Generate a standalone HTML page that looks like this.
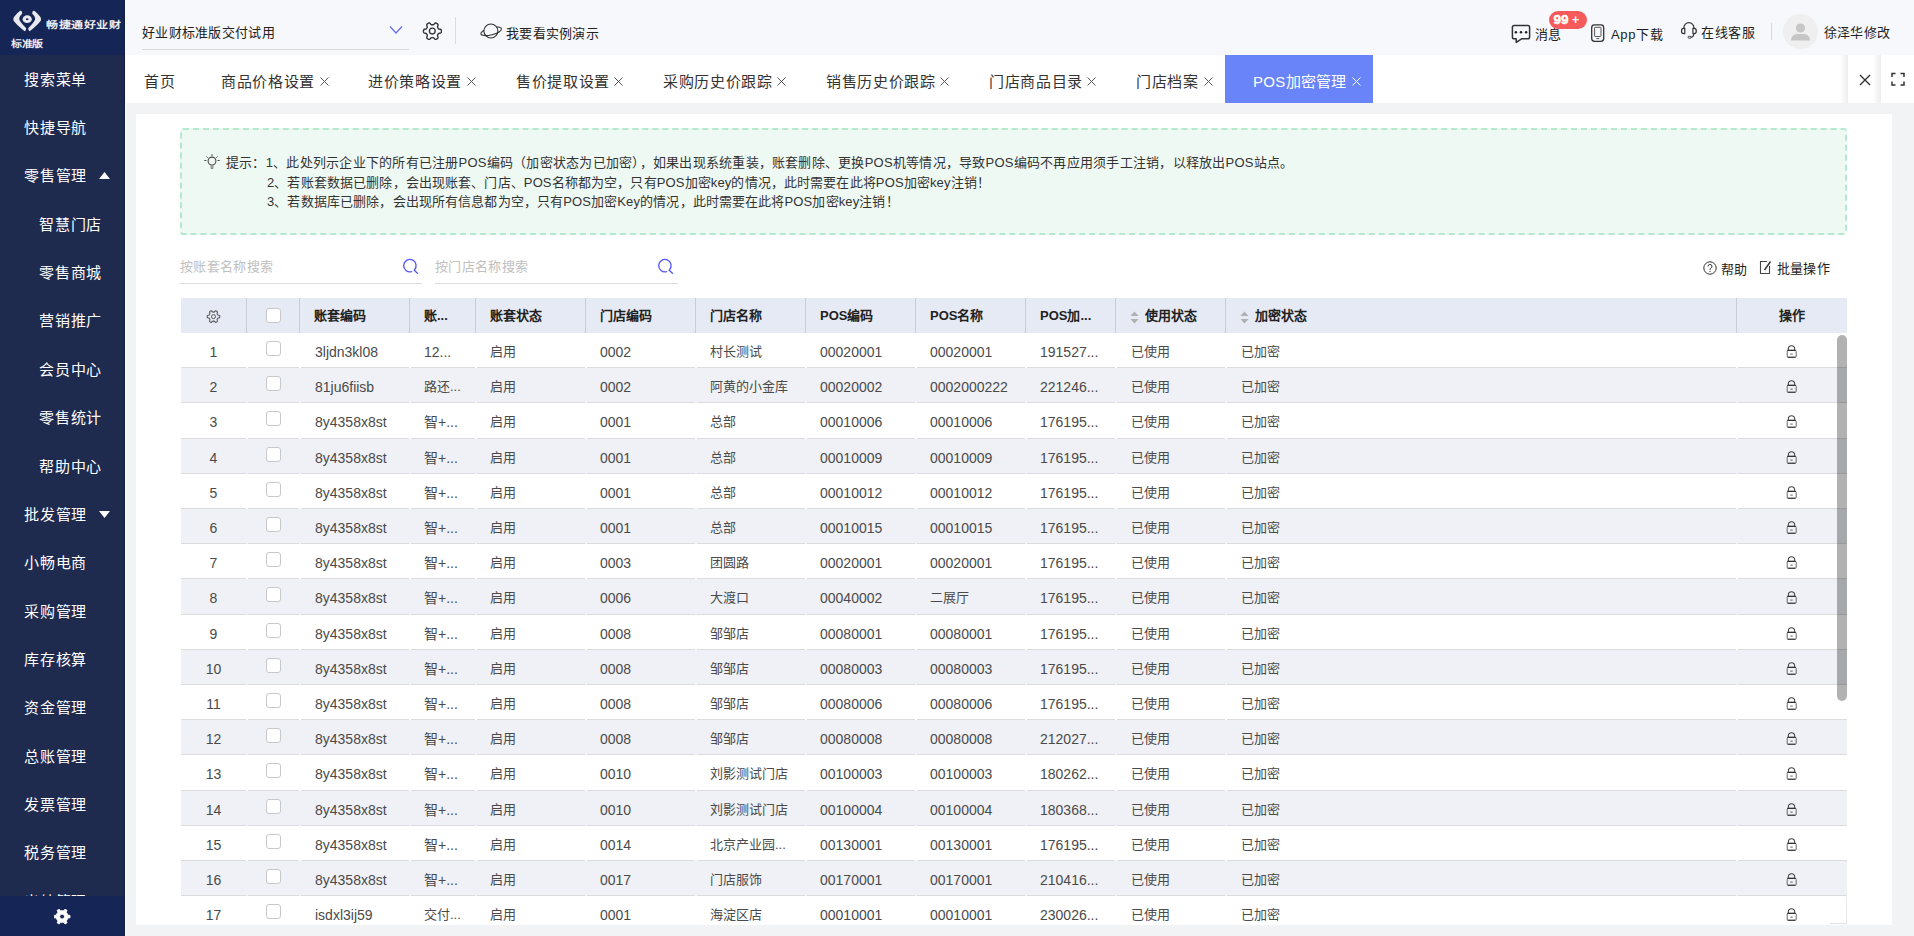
<!DOCTYPE html>
<html lang="zh-CN"><head><meta charset="utf-8"><title>POS加密管理</title>
<style>
*{box-sizing:border-box;margin:0;padding:0}
html,body{width:1914px;height:936px;overflow:hidden;background:#f2f3f5;font-family:"Liberation Sans",sans-serif;color:#333}
.abs{position:absolute;white-space:nowrap}
#side{position:absolute;left:0;top:0;width:125px;height:936px;background:#1e2a4e;border-right:1px solid #0e1d46}
#side .logo{position:absolute;left:0;top:0;width:124px;height:55px;background:#152555}
#side .mi{position:absolute;left:24px;color:#fff;font-size:15px;letter-spacing:0.8px;line-height:20px;font-weight:500}
#side .sub{left:39px}
#side .foot{position:absolute;left:0;top:896px;width:124px;height:40px;background:#152555}
#wline{position:absolute;left:125px;top:0;width:1px;height:936px;background:#fff}
#hdr{position:absolute;left:126px;top:0;width:1788px;height:55px;background:#f7f8fc}
#tabs{position:absolute;left:126px;top:55px;width:1788px;height:48px;background:#fff}
.tab{position:absolute;top:0;height:48px;line-height:48px;font-size:15px;letter-spacing:0.7px;color:#333}
.tab .x{display:inline-block;position:absolute}
#card{position:absolute;left:136px;top:114px;width:1756px;height:811px;background:#fff}
#tip{position:absolute;left:180px;top:128px;width:1667px;height:107px;background:#eff9f4;border:2px dashed #b5e9cf;border-radius:3px}
.tipt{position:absolute;font-size:13px;color:#333;letter-spacing:0.2px;line-height:19px}
.hd{position:absolute;top:298px;height:35px;background:#e6eaf4}
.ht{position:absolute;top:298px;line-height:35px;font-size:13px;font-weight:700;color:#222}
.vb{position:absolute;top:298px;width:1px;height:35px;background:#c9ccd3}
.row{position:absolute;left:181px;width:1666px}
.c{position:absolute;font-size:14px;color:#4a4a4a;line-height:20px}
.cj{font-size:13px}
.bb{position:absolute;height:1px;background:#dcdcdc}
.cb{position:absolute;width:15px;height:15px;border:1px solid #c8c8c8;border-radius:3px;background:#fff}
</style></head><body>

<div id="side"><div class="logo"></div>
<div class="mi" style="top:69.7px">搜索菜单</div>
<div class="mi" style="top:118.1px">快捷导航</div>
<div class="mi" style="top:166.4px">零售管理</div>
<div class="mi sub" style="top:214.8px">智慧门店</div>
<div class="mi sub" style="top:263.1px">零售商城</div>
<div class="mi sub" style="top:311.4px">营销推广</div>
<div class="mi sub" style="top:359.8px">会员中心</div>
<div class="mi sub" style="top:408.1px">零售统计</div>
<div class="mi sub" style="top:456.5px">帮助中心</div>
<div class="mi" style="top:504.9px">批发管理</div>
<div class="mi" style="top:553.2px">小畅电商</div>
<div class="mi" style="top:601.6px">采购管理</div>
<div class="mi" style="top:649.9px">库存核算</div>
<div class="mi" style="top:698.3px">资金管理</div>
<div class="mi" style="top:746.6px">总账管理</div>
<div class="mi" style="top:795.0px">发票管理</div>
<div class="mi" style="top:843.3px">税务管理</div>
<div class="mi" style="top:891.7px">出纳管理</div>
<svg class="abs" style="left:98px;top:171px" width="13" height="9"><path d="M6.5 1L12 8H1z" fill="#fff"/></svg>
<svg class="abs" style="left:98px;top:510px" width="13" height="9"><path d="M1 1H12L6.5 8z" fill="#fff"/></svg>
<div class="foot"></div>
<svg class="abs" style="left:54px;top:909px" width="17" height="16" viewBox="0 0 17 16"><path fill="#fff" fill-rule="evenodd" stroke="#fff" stroke-width="0.8" stroke-linejoin="round" d="M13.49 4.97 L13.95 6.25 L16.00 6.35 L16.00 8.85 L13.95 8.95 L13.49 10.23 L13.07 10.96 L12.19 11.99 L13.13 13.82 L10.97 15.07 L9.85 13.34 L8.52 13.59 L7.68 13.59 L6.35 13.34 L5.23 15.07 L3.07 13.82 L4.01 11.99 L3.13 10.96 L2.71 10.23 L2.25 8.95 L0.20 8.85 L0.20 6.35 L2.25 6.25 L2.71 4.97 L3.13 4.24 L4.01 3.21 L3.07 1.38 L5.23 0.13 L6.35 1.86 L7.68 1.61 L8.52 1.61 L9.85 1.86 L10.97 0.13 L13.13 1.38 L12.19 3.21 L13.07 4.24Z M10.50 7.60A2.4 2.4 0 1 0 5.70 7.60A2.4 2.4 0 1 0 10.50 7.60Z"/></svg>
</div><div id="wline"></div>
<svg class="abs" style="left:0;top:0" width="60" height="40" viewBox="0 0 60 40">
<path d="M20.5 10.5Q22.6 11.6 22.2 13.8Q18.8 16.8 19.3 19.5Q20.2 22.3 26.2 28.2Q26.2 30.6 24.7 31.3Q17.5 25.8 14.2 21.6Q12.4 19 14.4 16.4Q17 13 20.5 10.5Z" fill="#e8e9ee"/>
<path d="M33.9 10.5Q31.8 11.6 32.2 13.8Q35.6 16.8 35.1 19.5Q34.2 22.3 28.2 28.2Q28.2 30.6 29.7 31.3Q36.9 25.8 40.2 21.6Q42 19 40 16.4Q37.4 13 33.9 10.5Z" fill="#e8e9ee"/>
<ellipse cx="27.2" cy="19.2" rx="4.6" ry="3.9" fill="#e8e9ee"/>
<ellipse cx="27.2" cy="19.2" rx="1.3" ry="0.9" fill="#1a2553"/>
</svg>
<div class="abs" style="left:46px;top:14.5px;font-size:12px;font-weight:700;color:#eceef3;letter-spacing:0.55px;line-height:16px;transform:scaleY(0.8);transform-origin:0 100%">畅捷通好业财</div>
<div class="abs" style="left:11px;top:36px;font-size:11px;font-weight:700;color:#eceef3;letter-spacing:-0.4px;line-height:14px;transform:scaleY(0.85);transform-origin:0 100%">标准版</div>
<div id="hdr"></div>
<div class="abs" style="left:142px;top:24px;font-size:13px;letter-spacing:0.3px;line-height:18px;color:#222">好业财标准版交付试用</div>
<div class="abs" style="left:142px;top:49px;width:267px;height:1px;background:#dadada"></div>
<svg class="abs" style="left:389px;top:25px" width="14" height="10"><path d="M1 1.5L7 8L13 1.5" fill="none" stroke="#6a6ef2" stroke-width="1.3"/></svg>
<svg class="abs" style="left:420px;top:19px" width="25" height="25" viewBox="420 19 25 25"><path fill="none" stroke="#333" stroke-width="1.4" d="M441.35 31.20 L441.35 31.43 L441.33 31.67 L441.30 31.90 L441.26 32.13 L441.20 32.36 L441.09 32.58 L440.93 32.78 L440.67 32.96 L440.30 33.10 L439.84 33.19 L439.38 33.27 L439.00 33.35 L438.74 33.44 L438.56 33.56 L438.43 33.70 L438.33 33.84 L438.24 33.98 L438.15 34.13 L438.07 34.28 L437.99 34.42 L437.90 34.57 L437.82 34.72 L437.73 34.86 L437.65 35.01 L437.58 35.17 L437.53 35.35 L437.51 35.57 L437.56 35.85 L437.68 36.21 L437.84 36.64 L437.99 37.09 L438.06 37.49 L438.03 37.80 L437.94 38.04 L437.80 38.24 L437.64 38.41 L437.46 38.56 L437.27 38.70 L437.08 38.83 L436.88 38.95 L436.67 39.06 L436.46 39.17 L436.25 39.26 L436.02 39.34 L435.80 39.40 L435.55 39.42 L435.30 39.38 L435.01 39.24 L434.71 38.99 L434.39 38.64 L434.10 38.27 L433.84 37.99 L433.63 37.81 L433.43 37.72 L433.25 37.67 L433.08 37.65 L432.91 37.65 L432.74 37.65 L432.57 37.65 L432.40 37.65 L432.23 37.65 L432.06 37.65 L431.89 37.65 L431.72 37.65 L431.55 37.67 L431.37 37.72 L431.17 37.81 L430.96 37.99 L430.70 38.27 L430.41 38.64 L430.09 38.99 L429.79 39.24 L429.50 39.38 L429.25 39.42 L429.00 39.40 L428.78 39.34 L428.55 39.26 L428.34 39.17 L428.13 39.06 L427.92 38.95 L427.72 38.83 L427.53 38.70 L427.34 38.56 L427.16 38.41 L427.00 38.24 L426.86 38.04 L426.77 37.80 L426.74 37.49 L426.81 37.09 L426.96 36.64 L427.12 36.21 L427.24 35.85 L427.29 35.57 L427.27 35.35 L427.22 35.17 L427.15 35.01 L427.07 34.86 L426.98 34.72 L426.90 34.57 L426.81 34.42 L426.73 34.28 L426.65 34.13 L426.56 33.98 L426.47 33.84 L426.37 33.70 L426.24 33.56 L426.06 33.44 L425.80 33.35 L425.42 33.27 L424.96 33.19 L424.50 33.10 L424.13 32.96 L423.87 32.78 L423.71 32.58 L423.60 32.36 L423.54 32.13 L423.50 31.90 L423.47 31.67 L423.45 31.43 L423.45 31.20 L423.45 30.97 L423.47 30.73 L423.50 30.50 L423.54 30.27 L423.60 30.04 L423.71 29.82 L423.87 29.62 L424.13 29.44 L424.50 29.30 L424.96 29.21 L425.42 29.13 L425.80 29.05 L426.06 28.96 L426.24 28.84 L426.37 28.70 L426.47 28.56 L426.56 28.42 L426.65 28.27 L426.73 28.12 L426.81 27.98 L426.90 27.83 L426.98 27.68 L427.07 27.54 L427.15 27.39 L427.22 27.23 L427.27 27.05 L427.29 26.83 L427.24 26.55 L427.12 26.19 L426.96 25.76 L426.81 25.31 L426.74 24.91 L426.77 24.60 L426.86 24.36 L427.00 24.16 L427.16 23.99 L427.34 23.84 L427.53 23.70 L427.72 23.57 L427.92 23.45 L428.13 23.34 L428.34 23.23 L428.55 23.14 L428.78 23.06 L429.00 23.00 L429.25 22.98 L429.50 23.02 L429.79 23.16 L430.09 23.41 L430.41 23.76 L430.70 24.13 L430.96 24.41 L431.17 24.59 L431.37 24.68 L431.55 24.73 L431.72 24.75 L431.89 24.75 L432.06 24.75 L432.23 24.75 L432.40 24.75 L432.57 24.75 L432.74 24.75 L432.91 24.75 L433.08 24.75 L433.25 24.73 L433.43 24.68 L433.63 24.59 L433.84 24.41 L434.10 24.13 L434.39 23.76 L434.71 23.41 L435.01 23.16 L435.30 23.02 L435.55 22.98 L435.80 23.00 L436.02 23.06 L436.25 23.14 L436.46 23.23 L436.67 23.34 L436.88 23.45 L437.08 23.57 L437.27 23.70 L437.46 23.84 L437.64 23.99 L437.80 24.16 L437.94 24.36 L438.03 24.60 L438.06 24.91 L437.99 25.31 L437.84 25.76 L437.68 26.19 L437.56 26.55 L437.51 26.83 L437.53 27.05 L437.58 27.23 L437.65 27.39 L437.73 27.54 L437.82 27.68 L437.90 27.83 L437.99 27.98 L438.07 28.12 L438.15 28.27 L438.24 28.42 L438.33 28.56 L438.43 28.70 L438.56 28.84 L438.74 28.96 L439.00 29.05 L439.38 29.13 L439.84 29.21 L440.30 29.30 L440.67 29.44 L440.93 29.62 L441.09 29.82 L441.20 30.04 L441.26 30.27 L441.30 30.50 L441.33 30.73 L441.35 30.97Z"/><circle cx="432.3" cy="31.1" r="2.9" fill="none" stroke="#333" stroke-width="1.3"/></svg>
<div class="abs" style="left:455px;top:17px;width:1px;height:27px;background:#dcdcdc"></div>
<svg class="abs" style="left:478px;top:20px" width="26" height="22" viewBox="478 20 26 22"><path d="M480.82 33.89A10.7 3.6 -14 0 1 501.58 28.71" fill="none" stroke="#333" stroke-width="1.1"/><circle cx="490.9" cy="31" r="7" fill="#f7f8fc" stroke="#333" stroke-width="1.1"/><path d="M501.58 28.71A10.7 3.6 -14 0 1 480.82 33.89" fill="none" stroke="#333" stroke-width="1.1"/></svg>
<div class="abs" style="left:506px;top:25px;font-size:13px;letter-spacing:0.3px;line-height:18px;color:#222">我要看实例演示</div>
<svg class="abs" style="left:1508px;top:21px" width="26" height="25" viewBox="1508 21 26 25"><path d="M1514.2 25.6H1527.8Q1529.6 25.6 1529.6 27.4V37Q1529.6 38.8 1527.8 38.8H1521.6L1516.2 42.4V38.8H1514.2Q1512.4 38.8 1512.4 37V27.4Q1512.4 25.6 1514.2 25.6Z" fill="none" stroke="#333" stroke-width="1.5" stroke-linejoin="round"/><circle cx="1515.9" cy="32.3" r="1.25" fill="#222"/><circle cx="1521" cy="32.3" r="1.25" fill="#222"/><circle cx="1526.1" cy="32.3" r="1.25" fill="#222"/></svg>
<div class="abs" style="left:1535px;top:25.5px;font-size:13px;line-height:18px;color:#222">消息</div>
<div class="abs" style="left:1549px;top:11px;width:38px;height:18px;border-radius:9px;background:#f65a5a"></div><div class="abs" style="left:1553.5px;top:10.5px;font-size:13.5px;font-weight:700;line-height:18px;color:#fff;-webkit-text-stroke:0.5px #fff">99</div><div class="abs" style="left:1572px;top:11px;font-size:12.5px;font-weight:700;line-height:18px;color:#fff">+</div>
<svg class="abs" style="left:1589px;top:22px" width="18" height="22" viewBox="1589 22 18 22"><rect x="1591.7" y="24.9" width="12" height="16.5" rx="2.8" fill="none" stroke="#333" stroke-width="1.3"/><rect x="1594.6" y="27.3" width="6.4" height="9.2" rx="0.6" fill="none" stroke="#555" stroke-width="1"/><path d="M1596.4 38.6h2.8" stroke="#444" stroke-width="0.9"/></svg>
<div class="abs" style="left:1611px;top:25.5px;font-size:13px;line-height:18px;color:#222;letter-spacing:0.7px">App下载</div>
<svg class="abs" style="left:1678px;top:19px" width="22" height="22" viewBox="1678 19 22 22"><path d="M1683.9 28.3V27.6A5 5 0 0 1 1693.9 27.6V28.3" fill="none" stroke="#333" stroke-width="1.2"/><path d="M1684.8 28.3H1683.6Q1681.5 28.3 1681.5 30.95Q1681.5 33.6 1683.6 33.6H1684.8Z" fill="none" stroke="#333" stroke-width="1.2" stroke-linejoin="round"/><path d="M1692.9 28.3H1694.1Q1696.3 28.3 1696.3 30.95Q1696.3 33.6 1694.1 33.6H1692.9Z" fill="none" stroke="#333" stroke-width="1.2" stroke-linejoin="round"/><path d="M1693.9 33.9Q1693.5 37 1691.1 37.3" fill="none" stroke="#333" stroke-width="1.1"/><ellipse cx="1689.6" cy="37.3" rx="1.6" ry="1.05" fill="none" stroke="#333" stroke-width="1"/></svg>
<div class="abs" style="left:1701px;top:23.5px;font-size:13px;line-height:18px;color:#222;letter-spacing:0.5px">在线客服</div>
<div class="abs" style="left:1771px;top:23px;width:1px;height:17px;background:#d6d6d6"></div>
<div class="abs" style="left:1783px;top:14px;width:35px;height:35px;border-radius:50%;background:#efefef"></div>
<svg class="abs" style="left:1790px;top:22px" width="20" height="19" viewBox="0 0 20 19"><circle cx="10.5" cy="6" r="4.6" fill="#c6c6c6"/><path d="M1 18.5q0-5 5-6.5h9q5 1.5 5 6.5z" fill="#c6c6c6"/></svg>
<div class="abs" style="left:1824px;top:24px;font-size:13px;letter-spacing:0.2px;line-height:18px;color:#222">徐泽华修改</div>
<div id="tabs"></div>
<div class="abs" style="left:144px;top:70.5px;font-size:15px;letter-spacing:0.7px;line-height:22px;color:#333">首页</div>
<div class="abs" style="left:221px;top:70.5px;font-size:15px;letter-spacing:0.7px;line-height:22px;color:#333">商品价格设置</div>
<svg class="abs" style="left:320px;top:77px" width="9" height="9"><path d="M0.5 0.5L8.5 8.5M8.5 0.5L0.5 8.5" stroke="#555" stroke-width="1"/></svg>
<div class="abs" style="left:368px;top:70.5px;font-size:15px;letter-spacing:0.7px;line-height:22px;color:#333">进价策略设置</div>
<svg class="abs" style="left:467px;top:77px" width="9" height="9"><path d="M0.5 0.5L8.5 8.5M8.5 0.5L0.5 8.5" stroke="#555" stroke-width="1"/></svg>
<div class="abs" style="left:516px;top:70.5px;font-size:15px;letter-spacing:0.7px;line-height:22px;color:#333">售价提取设置</div>
<svg class="abs" style="left:614px;top:77px" width="9" height="9"><path d="M0.5 0.5L8.5 8.5M8.5 0.5L0.5 8.5" stroke="#555" stroke-width="1"/></svg>
<div class="abs" style="left:663px;top:70.5px;font-size:15px;letter-spacing:0.7px;line-height:22px;color:#333">采购历史价跟踪</div>
<svg class="abs" style="left:777px;top:77px" width="9" height="9"><path d="M0.5 0.5L8.5 8.5M8.5 0.5L0.5 8.5" stroke="#555" stroke-width="1"/></svg>
<div class="abs" style="left:826px;top:70.5px;font-size:15px;letter-spacing:0.7px;line-height:22px;color:#333">销售历史价跟踪</div>
<svg class="abs" style="left:940px;top:77px" width="9" height="9"><path d="M0.5 0.5L8.5 8.5M8.5 0.5L0.5 8.5" stroke="#555" stroke-width="1"/></svg>
<div class="abs" style="left:989px;top:70.5px;font-size:15px;letter-spacing:0.7px;line-height:22px;color:#333">门店商品目录</div>
<svg class="abs" style="left:1087px;top:77px" width="9" height="9"><path d="M0.5 0.5L8.5 8.5M8.5 0.5L0.5 8.5" stroke="#555" stroke-width="1"/></svg>
<div class="abs" style="left:1136px;top:70.5px;font-size:15px;letter-spacing:0.7px;line-height:22px;color:#333">门店档案</div>
<svg class="abs" style="left:1204px;top:77px" width="9" height="9"><path d="M0.5 0.5L8.5 8.5M8.5 0.5L0.5 8.5" stroke="#555" stroke-width="1"/></svg>
<div class="abs" style="left:1225px;top:55px;width:148px;height:48px;background:#6984f8"></div>
<div class="abs" style="left:1253px;top:70.5px;font-size:15px;letter-spacing:0.3px;line-height:22px;color:#fff">POS加密管理</div>
<svg class="abs" style="left:1352px;top:77px" width="9" height="9"><path d="M0.5 0.5L8.5 8.5M8.5 0.5L0.5 8.5" stroke="#fff" stroke-width="1"/></svg>
<div class="abs" style="left:1840px;top:55px;width:8px;height:48px;background:linear-gradient(90deg,rgba(0,0,0,0),rgba(0,0,0,0.07))"></div>
<div class="abs" style="left:1848px;top:55px;width:33px;height:48px;background:#fff"></div>
<div class="abs" style="left:1873px;top:55px;width:8px;height:48px;background:linear-gradient(90deg,rgba(0,0,0,0),rgba(0,0,0,0.07))"></div>
<div class="abs" style="left:1881px;top:55px;width:33px;height:48px;background:#fff"></div>
<svg class="abs" style="left:1859px;top:74px" width="12" height="12"><path d="M1 1L11 11M11 1L1 11" stroke="#333" stroke-width="1.4"/></svg>
<svg class="abs" style="left:1891px;top:72px" width="14" height="14"><path d="M1 5V1.5h3.5M9.5 1.5H13V5M13 9.5V13H9.5M4.5 13H1V9.5" fill="none" stroke="#333" stroke-width="1.5"/></svg>
<div id="card"></div>
<div id="tip"></div>
<svg class="abs" style="left:203px;top:153px" width="18" height="17" viewBox="0 0 18 17"><circle cx="9" cy="8" r="3.9" fill="none" stroke="#444" stroke-width="1.05"/><rect x="7.4" y="12" width="3.2" height="2.6" fill="#9a9a9a"/><path d="M7.8 15.2h2.4" stroke="#555" stroke-width="1"/><path d="M9 1v2M1.2 7.5h2.3M14.5 7.5h2.3M3.5 3.5l1.2 1.2M14.5 3.5l-1.2 1.2" stroke="#555" stroke-width="1"/></svg>
<div class="tipt" style="left:226px;top:153px;letter-spacing:0.24px">提示：1、此处列示企业下的所有已注册POS编码（加密状态为已加密），如果出现系统重装，账套删除、更换POS机等情况，导致POS编码不再应用须手工注销，以释放出POS站点。</div>
<div class="tipt" style="left:267px;top:173px;letter-spacing:0.13px">2、若账套数据已删除，会出现账套、门店、POS名称都为空，只有POS加密key的情况，此时需要在此将POS加密key注销！</div>
<div class="tipt" style="left:267px;top:192px;letter-spacing:0.13px">3、若数据库已删除，会出现所有信息都为空，只有POS加密Key的情况，此时需要在此将POS加密key注销！</div>
<div class="abs" style="left:180px;top:256.5px;font-size:13px;line-height:20px;color:#c0c0c0;letter-spacing:0.35px">按账套名称搜索</div>
<div class="abs" style="left:180px;top:283px;width:242px;height:1px;background:#dcdcdc"></div>
<svg class="abs" style="left:400px;top:256px" width="20" height="20" viewBox="400 256 20 20"><path d="M411.6 271.6A6.2 6.2 0 1 1 414.4 269.9" fill="none" stroke="#5457f5" stroke-width="1.35" stroke-linecap="round"/><path d="M414.3 270.3L417.4 273.3" stroke="#5457f5" stroke-width="1.35" stroke-linecap="round"/></svg>
<div class="abs" style="left:435px;top:256.5px;font-size:13px;line-height:20px;color:#c0c0c0;letter-spacing:0.35px">按门店名称搜索</div>
<div class="abs" style="left:435px;top:283px;width:243px;height:1px;background:#dcdcdc"></div>
<svg class="abs" style="left:655px;top:256px" width="20" height="20" viewBox="400 256 20 20"><path d="M411.6 271.6A6.2 6.2 0 1 1 414.4 269.9" fill="none" stroke="#5457f5" stroke-width="1.35" stroke-linecap="round"/><path d="M414.3 270.3L417.4 273.3" stroke="#5457f5" stroke-width="1.35" stroke-linecap="round"/></svg>
<svg class="abs" style="left:1703px;top:261px" width="14" height="14" viewBox="0 0 14 14"><circle cx="7" cy="7" r="6.2" fill="none" stroke="#333" stroke-width="1"/><path d="M5 5.4a2 2 0 1 1 2.7 1.9c-.5.2-.7.5-.7 1v.7" fill="none" stroke="#333" stroke-width="1"/><circle cx="7" cy="10.4" r=".6" fill="#333"/></svg>
<div class="abs" style="left:1721px;top:261px;font-size:13px;line-height:18px;color:#222">帮助</div>
<svg class="abs" style="left:1759px;top:260px" width="13" height="15" viewBox="0 0 13 15"><path d="M8 1.5H1.5v12h9V6" fill="none" stroke="#444" stroke-width="1.1"/><path d="M11.5 1.5L5.5 10" stroke="#333" stroke-width="1.4"/></svg>
<div class="abs" style="left:1777px;top:259.5px;font-size:13px;line-height:18px;color:#222;letter-spacing:0.2px">批量操作</div>
<div class="hd" style="left:181px;width:1666px"></div>
<div class="vb" style="left:246px"></div>
<div class="vb" style="left:299px"></div>
<div class="vb" style="left:409px"></div>
<div class="vb" style="left:475px"></div>
<div class="vb" style="left:585px"></div>
<div class="vb" style="left:695px"></div>
<div class="vb" style="left:805px"></div>
<div class="vb" style="left:915px"></div>
<div class="vb" style="left:1025px"></div>
<div class="vb" style="left:1115px"></div>
<div class="vb" style="left:1225px"></div>
<div class="vb" style="left:1736px"></div>
<svg class="abs" style="left:205px;top:308px" width="17" height="17" viewBox="205 308 17 17"><path fill="none" stroke="#555" stroke-width="1.05" d="M219.80 316.60 L219.79 316.82 L219.77 317.04 L219.74 317.26 L219.67 317.47 L219.55 317.67 L219.32 317.84 L218.94 317.96 L218.49 318.03 L218.12 318.10 L217.88 318.19 L217.74 318.31 L217.64 318.44 L217.55 318.58 L217.48 318.71 L217.40 318.85 L217.32 318.99 L217.24 319.12 L217.16 319.26 L217.10 319.41 L217.07 319.60 L217.11 319.85 L217.23 320.21 L217.40 320.63 L217.48 321.02 L217.45 321.30 L217.34 321.51 L217.19 321.67 L217.02 321.81 L216.84 321.94 L216.65 322.06 L216.46 322.16 L216.26 322.25 L216.05 322.33 L215.83 322.38 L215.60 322.37 L215.34 322.25 L215.05 321.99 L214.76 321.64 L214.51 321.35 L214.31 321.19 L214.14 321.13 L213.97 321.10 L213.81 321.10 L213.66 321.10 L213.50 321.10 L213.34 321.10 L213.19 321.10 L213.03 321.10 L212.86 321.13 L212.69 321.19 L212.49 321.35 L212.24 321.64 L211.95 321.99 L211.66 322.25 L211.40 322.37 L211.17 322.38 L210.95 322.33 L210.74 322.25 L210.54 322.16 L210.35 322.06 L210.16 321.94 L209.98 321.81 L209.81 321.67 L209.66 321.51 L209.55 321.30 L209.52 321.02 L209.60 320.63 L209.77 320.21 L209.89 319.85 L209.93 319.60 L209.90 319.41 L209.84 319.26 L209.76 319.12 L209.68 318.99 L209.60 318.85 L209.52 318.71 L209.45 318.58 L209.36 318.44 L209.26 318.31 L209.12 318.19 L208.88 318.10 L208.51 318.03 L208.06 317.96 L207.68 317.84 L207.45 317.67 L207.33 317.47 L207.26 317.26 L207.23 317.04 L207.21 316.82 L207.20 316.60 L207.21 316.38 L207.23 316.16 L207.26 315.94 L207.33 315.73 L207.45 315.53 L207.68 315.36 L208.06 315.24 L208.51 315.17 L208.88 315.10 L209.12 315.01 L209.26 314.89 L209.36 314.76 L209.45 314.62 L209.52 314.49 L209.60 314.35 L209.68 314.21 L209.76 314.08 L209.84 313.94 L209.90 313.79 L209.93 313.60 L209.89 313.35 L209.77 312.99 L209.60 312.57 L209.52 312.18 L209.55 311.90 L209.66 311.69 L209.81 311.53 L209.98 311.39 L210.16 311.26 L210.35 311.14 L210.54 311.04 L210.74 310.95 L210.95 310.87 L211.17 310.82 L211.40 310.83 L211.66 310.95 L211.95 311.21 L212.24 311.56 L212.49 311.85 L212.69 312.01 L212.86 312.07 L213.03 312.10 L213.19 312.10 L213.34 312.10 L213.50 312.10 L213.66 312.10 L213.81 312.10 L213.97 312.10 L214.14 312.07 L214.31 312.01 L214.51 311.85 L214.76 311.56 L215.05 311.21 L215.34 310.95 L215.60 310.83 L215.83 310.82 L216.05 310.87 L216.26 310.95 L216.46 311.04 L216.65 311.14 L216.84 311.26 L217.02 311.39 L217.19 311.53 L217.34 311.69 L217.45 311.90 L217.48 312.18 L217.40 312.57 L217.23 312.99 L217.11 313.35 L217.07 313.60 L217.10 313.79 L217.16 313.94 L217.24 314.08 L217.32 314.21 L217.40 314.35 L217.48 314.49 L217.55 314.62 L217.64 314.76 L217.74 314.89 L217.88 315.01 L218.12 315.10 L218.49 315.17 L218.94 315.24 L219.32 315.36 L219.55 315.53 L219.67 315.73 L219.74 315.94 L219.77 316.16 L219.79 316.38Z"/><circle cx="213.5" cy="316.6" r="2" fill="none" stroke="#555" stroke-width="1"/></svg>
<div class="cb" style="left:266px;top:308px"></div>
<div class="ht" style="left:314px">账套编码</div>
<div class="ht" style="left:424px">账...</div>
<div class="ht" style="left:490px">账套状态</div>
<div class="ht" style="left:600px">门店编码</div>
<div class="ht" style="left:710px">门店名称</div>
<div class="ht" style="left:820px">POS编码</div>
<div class="ht" style="left:930px">POS名称</div>
<div class="ht" style="left:1040px">POS加...</div>
<div class="ht" style="left:1145px">使用状态</div>
<div class="ht" style="left:1255px">加密状态</div>
<div class="ht" style="left:1779px">操作</div>
<svg class="abs" style="left:1130px;top:311px" width="9" height="13"><path d="M4.5 0.5L8.5 5H0.5z" fill="#b0b0b0"/><path d="M0.5 8H8.5L4.5 12.5z" fill="#b0b0b0"/></svg>
<svg class="abs" style="left:1240px;top:311px" width="9" height="13"><path d="M4.5 0.5L8.5 5H0.5z" fill="#b0b0b0"/><path d="M0.5 8H8.5L4.5 12.5z" fill="#b0b0b0"/></svg>
<div class="row" style="top:333.00px;height:35.20px;background:#fff"></div>
<div class="bb" style="left:181px;top:367.20px;width:65px"></div>
<div class="bb" style="left:248px;top:367.20px;width:51px"></div>
<div class="bb" style="left:301px;top:367.20px;width:108px"></div>
<div class="bb" style="left:411px;top:367.20px;width:64px"></div>
<div class="bb" style="left:477px;top:367.20px;width:108px"></div>
<div class="bb" style="left:587px;top:367.20px;width:108px"></div>
<div class="bb" style="left:697px;top:367.20px;width:108px"></div>
<div class="bb" style="left:807px;top:367.20px;width:108px"></div>
<div class="bb" style="left:917px;top:367.20px;width:108px"></div>
<div class="bb" style="left:1027px;top:367.20px;width:88px"></div>
<div class="bb" style="left:1117px;top:367.20px;width:108px"></div>
<div class="bb" style="left:1227px;top:367.20px;width:509px"></div>
<div class="bb" style="left:1738px;top:367.20px;width:109px"></div>
<div class="c" style="left:181px;width:65px;text-align:center;top:342.00px">1</div>
<div class="cb" style="left:266px;top:341.00px"></div>
<div class="c" style="left:315px;top:342.00px">3ljdn3kl08</div>
<div class="c" style="left:424px;top:342.00px">12...</div>
<div class="c cj" style="left:490px;top:342.00px">启用</div>
<div class="c" style="left:600px;top:342.00px">0002</div>
<div class="c cj" style="left:710px;top:342.00px">村长测试</div>
<div class="c" style="left:820px;top:342.00px">00020001</div>
<div class="c" style="left:930px;top:342.00px">00020001</div>
<div class="c" style="left:1040px;top:342.00px">191527...</div>
<div class="c cj" style="left:1131px;top:342.00px">已使用</div>
<div class="c cj" style="left:1241px;top:342.00px">已加密</div>
<svg class="abs" style="left:1785px;top:345.00px" width="13" height="14" viewBox="0 0 13 14"><path d="M3.35 5.3V3.8A3.15 3.15 0 0 1 9.65 3.8V5.3" fill="none" stroke="#444" stroke-width="1.05"/><rect x="2.2" y="5.35" width="9" height="6.9" rx="1" fill="none" stroke="#666" stroke-width="1"/><path d="M2.3 5.35H10.7M2.6 12.3H10.4" stroke="#333" stroke-width="1.05"/><path d="M5.3 9.1h2.4" stroke="#666" stroke-width="1"/></svg>
<div class="row" style="top:368.20px;height:35.20px;background:#f0f1f6"></div>
<div class="bb" style="left:181px;top:402.40px;width:65px"></div>
<div class="bb" style="left:248px;top:402.40px;width:51px"></div>
<div class="bb" style="left:301px;top:402.40px;width:108px"></div>
<div class="bb" style="left:411px;top:402.40px;width:64px"></div>
<div class="bb" style="left:477px;top:402.40px;width:108px"></div>
<div class="bb" style="left:587px;top:402.40px;width:108px"></div>
<div class="bb" style="left:697px;top:402.40px;width:108px"></div>
<div class="bb" style="left:807px;top:402.40px;width:108px"></div>
<div class="bb" style="left:917px;top:402.40px;width:108px"></div>
<div class="bb" style="left:1027px;top:402.40px;width:88px"></div>
<div class="bb" style="left:1117px;top:402.40px;width:108px"></div>
<div class="bb" style="left:1227px;top:402.40px;width:509px"></div>
<div class="bb" style="left:1738px;top:402.40px;width:109px"></div>
<div class="c" style="left:181px;width:65px;text-align:center;top:377.20px">2</div>
<div class="cb" style="left:266px;top:376.20px"></div>
<div class="c" style="left:315px;top:377.20px">81ju6fiisb</div>
<div class="c cj" style="left:424px;top:377.20px">路还...</div>
<div class="c cj" style="left:490px;top:377.20px">启用</div>
<div class="c" style="left:600px;top:377.20px">0002</div>
<div class="c cj" style="left:710px;top:377.20px">阿黄的小金库</div>
<div class="c" style="left:820px;top:377.20px">00020002</div>
<div class="c" style="left:930px;top:377.20px">0002000222</div>
<div class="c" style="left:1040px;top:377.20px">221246...</div>
<div class="c cj" style="left:1131px;top:377.20px">已使用</div>
<div class="c cj" style="left:1241px;top:377.20px">已加密</div>
<svg class="abs" style="left:1785px;top:380.20px" width="13" height="14" viewBox="0 0 13 14"><path d="M3.35 5.3V3.8A3.15 3.15 0 0 1 9.65 3.8V5.3" fill="none" stroke="#444" stroke-width="1.05"/><rect x="2.2" y="5.35" width="9" height="6.9" rx="1" fill="none" stroke="#666" stroke-width="1"/><path d="M2.3 5.35H10.7M2.6 12.3H10.4" stroke="#333" stroke-width="1.05"/><path d="M5.3 9.1h2.4" stroke="#666" stroke-width="1"/></svg>
<div class="row" style="top:403.40px;height:35.20px;background:#fff"></div>
<div class="bb" style="left:181px;top:437.60px;width:65px"></div>
<div class="bb" style="left:248px;top:437.60px;width:51px"></div>
<div class="bb" style="left:301px;top:437.60px;width:108px"></div>
<div class="bb" style="left:411px;top:437.60px;width:64px"></div>
<div class="bb" style="left:477px;top:437.60px;width:108px"></div>
<div class="bb" style="left:587px;top:437.60px;width:108px"></div>
<div class="bb" style="left:697px;top:437.60px;width:108px"></div>
<div class="bb" style="left:807px;top:437.60px;width:108px"></div>
<div class="bb" style="left:917px;top:437.60px;width:108px"></div>
<div class="bb" style="left:1027px;top:437.60px;width:88px"></div>
<div class="bb" style="left:1117px;top:437.60px;width:108px"></div>
<div class="bb" style="left:1227px;top:437.60px;width:509px"></div>
<div class="bb" style="left:1738px;top:437.60px;width:109px"></div>
<div class="c" style="left:181px;width:65px;text-align:center;top:412.40px">3</div>
<div class="cb" style="left:266px;top:411.40px"></div>
<div class="c" style="left:315px;top:412.40px">8y4358x8st</div>
<div class="c" style="left:424px;top:412.40px">智+...</div>
<div class="c cj" style="left:490px;top:412.40px">启用</div>
<div class="c" style="left:600px;top:412.40px">0001</div>
<div class="c cj" style="left:710px;top:412.40px">总部</div>
<div class="c" style="left:820px;top:412.40px">00010006</div>
<div class="c" style="left:930px;top:412.40px">00010006</div>
<div class="c" style="left:1040px;top:412.40px">176195...</div>
<div class="c cj" style="left:1131px;top:412.40px">已使用</div>
<div class="c cj" style="left:1241px;top:412.40px">已加密</div>
<svg class="abs" style="left:1785px;top:415.40px" width="13" height="14" viewBox="0 0 13 14"><path d="M3.35 5.3V3.8A3.15 3.15 0 0 1 9.65 3.8V5.3" fill="none" stroke="#444" stroke-width="1.05"/><rect x="2.2" y="5.35" width="9" height="6.9" rx="1" fill="none" stroke="#666" stroke-width="1"/><path d="M2.3 5.35H10.7M2.6 12.3H10.4" stroke="#333" stroke-width="1.05"/><path d="M5.3 9.1h2.4" stroke="#666" stroke-width="1"/></svg>
<div class="row" style="top:438.60px;height:35.20px;background:#f0f1f6"></div>
<div class="bb" style="left:181px;top:472.80px;width:65px"></div>
<div class="bb" style="left:248px;top:472.80px;width:51px"></div>
<div class="bb" style="left:301px;top:472.80px;width:108px"></div>
<div class="bb" style="left:411px;top:472.80px;width:64px"></div>
<div class="bb" style="left:477px;top:472.80px;width:108px"></div>
<div class="bb" style="left:587px;top:472.80px;width:108px"></div>
<div class="bb" style="left:697px;top:472.80px;width:108px"></div>
<div class="bb" style="left:807px;top:472.80px;width:108px"></div>
<div class="bb" style="left:917px;top:472.80px;width:108px"></div>
<div class="bb" style="left:1027px;top:472.80px;width:88px"></div>
<div class="bb" style="left:1117px;top:472.80px;width:108px"></div>
<div class="bb" style="left:1227px;top:472.80px;width:509px"></div>
<div class="bb" style="left:1738px;top:472.80px;width:109px"></div>
<div class="c" style="left:181px;width:65px;text-align:center;top:447.60px">4</div>
<div class="cb" style="left:266px;top:446.60px"></div>
<div class="c" style="left:315px;top:447.60px">8y4358x8st</div>
<div class="c" style="left:424px;top:447.60px">智+...</div>
<div class="c cj" style="left:490px;top:447.60px">启用</div>
<div class="c" style="left:600px;top:447.60px">0001</div>
<div class="c cj" style="left:710px;top:447.60px">总部</div>
<div class="c" style="left:820px;top:447.60px">00010009</div>
<div class="c" style="left:930px;top:447.60px">00010009</div>
<div class="c" style="left:1040px;top:447.60px">176195...</div>
<div class="c cj" style="left:1131px;top:447.60px">已使用</div>
<div class="c cj" style="left:1241px;top:447.60px">已加密</div>
<svg class="abs" style="left:1785px;top:450.60px" width="13" height="14" viewBox="0 0 13 14"><path d="M3.35 5.3V3.8A3.15 3.15 0 0 1 9.65 3.8V5.3" fill="none" stroke="#444" stroke-width="1.05"/><rect x="2.2" y="5.35" width="9" height="6.9" rx="1" fill="none" stroke="#666" stroke-width="1"/><path d="M2.3 5.35H10.7M2.6 12.3H10.4" stroke="#333" stroke-width="1.05"/><path d="M5.3 9.1h2.4" stroke="#666" stroke-width="1"/></svg>
<div class="row" style="top:473.80px;height:35.20px;background:#fff"></div>
<div class="bb" style="left:181px;top:508.00px;width:65px"></div>
<div class="bb" style="left:248px;top:508.00px;width:51px"></div>
<div class="bb" style="left:301px;top:508.00px;width:108px"></div>
<div class="bb" style="left:411px;top:508.00px;width:64px"></div>
<div class="bb" style="left:477px;top:508.00px;width:108px"></div>
<div class="bb" style="left:587px;top:508.00px;width:108px"></div>
<div class="bb" style="left:697px;top:508.00px;width:108px"></div>
<div class="bb" style="left:807px;top:508.00px;width:108px"></div>
<div class="bb" style="left:917px;top:508.00px;width:108px"></div>
<div class="bb" style="left:1027px;top:508.00px;width:88px"></div>
<div class="bb" style="left:1117px;top:508.00px;width:108px"></div>
<div class="bb" style="left:1227px;top:508.00px;width:509px"></div>
<div class="bb" style="left:1738px;top:508.00px;width:109px"></div>
<div class="c" style="left:181px;width:65px;text-align:center;top:482.80px">5</div>
<div class="cb" style="left:266px;top:481.80px"></div>
<div class="c" style="left:315px;top:482.80px">8y4358x8st</div>
<div class="c" style="left:424px;top:482.80px">智+...</div>
<div class="c cj" style="left:490px;top:482.80px">启用</div>
<div class="c" style="left:600px;top:482.80px">0001</div>
<div class="c cj" style="left:710px;top:482.80px">总部</div>
<div class="c" style="left:820px;top:482.80px">00010012</div>
<div class="c" style="left:930px;top:482.80px">00010012</div>
<div class="c" style="left:1040px;top:482.80px">176195...</div>
<div class="c cj" style="left:1131px;top:482.80px">已使用</div>
<div class="c cj" style="left:1241px;top:482.80px">已加密</div>
<svg class="abs" style="left:1785px;top:485.80px" width="13" height="14" viewBox="0 0 13 14"><path d="M3.35 5.3V3.8A3.15 3.15 0 0 1 9.65 3.8V5.3" fill="none" stroke="#444" stroke-width="1.05"/><rect x="2.2" y="5.35" width="9" height="6.9" rx="1" fill="none" stroke="#666" stroke-width="1"/><path d="M2.3 5.35H10.7M2.6 12.3H10.4" stroke="#333" stroke-width="1.05"/><path d="M5.3 9.1h2.4" stroke="#666" stroke-width="1"/></svg>
<div class="row" style="top:509.00px;height:35.20px;background:#f0f1f6"></div>
<div class="bb" style="left:181px;top:543.20px;width:65px"></div>
<div class="bb" style="left:248px;top:543.20px;width:51px"></div>
<div class="bb" style="left:301px;top:543.20px;width:108px"></div>
<div class="bb" style="left:411px;top:543.20px;width:64px"></div>
<div class="bb" style="left:477px;top:543.20px;width:108px"></div>
<div class="bb" style="left:587px;top:543.20px;width:108px"></div>
<div class="bb" style="left:697px;top:543.20px;width:108px"></div>
<div class="bb" style="left:807px;top:543.20px;width:108px"></div>
<div class="bb" style="left:917px;top:543.20px;width:108px"></div>
<div class="bb" style="left:1027px;top:543.20px;width:88px"></div>
<div class="bb" style="left:1117px;top:543.20px;width:108px"></div>
<div class="bb" style="left:1227px;top:543.20px;width:509px"></div>
<div class="bb" style="left:1738px;top:543.20px;width:109px"></div>
<div class="c" style="left:181px;width:65px;text-align:center;top:518.00px">6</div>
<div class="cb" style="left:266px;top:517.00px"></div>
<div class="c" style="left:315px;top:518.00px">8y4358x8st</div>
<div class="c" style="left:424px;top:518.00px">智+...</div>
<div class="c cj" style="left:490px;top:518.00px">启用</div>
<div class="c" style="left:600px;top:518.00px">0001</div>
<div class="c cj" style="left:710px;top:518.00px">总部</div>
<div class="c" style="left:820px;top:518.00px">00010015</div>
<div class="c" style="left:930px;top:518.00px">00010015</div>
<div class="c" style="left:1040px;top:518.00px">176195...</div>
<div class="c cj" style="left:1131px;top:518.00px">已使用</div>
<div class="c cj" style="left:1241px;top:518.00px">已加密</div>
<svg class="abs" style="left:1785px;top:521.00px" width="13" height="14" viewBox="0 0 13 14"><path d="M3.35 5.3V3.8A3.15 3.15 0 0 1 9.65 3.8V5.3" fill="none" stroke="#444" stroke-width="1.05"/><rect x="2.2" y="5.35" width="9" height="6.9" rx="1" fill="none" stroke="#666" stroke-width="1"/><path d="M2.3 5.35H10.7M2.6 12.3H10.4" stroke="#333" stroke-width="1.05"/><path d="M5.3 9.1h2.4" stroke="#666" stroke-width="1"/></svg>
<div class="row" style="top:544.20px;height:35.20px;background:#fff"></div>
<div class="bb" style="left:181px;top:578.40px;width:65px"></div>
<div class="bb" style="left:248px;top:578.40px;width:51px"></div>
<div class="bb" style="left:301px;top:578.40px;width:108px"></div>
<div class="bb" style="left:411px;top:578.40px;width:64px"></div>
<div class="bb" style="left:477px;top:578.40px;width:108px"></div>
<div class="bb" style="left:587px;top:578.40px;width:108px"></div>
<div class="bb" style="left:697px;top:578.40px;width:108px"></div>
<div class="bb" style="left:807px;top:578.40px;width:108px"></div>
<div class="bb" style="left:917px;top:578.40px;width:108px"></div>
<div class="bb" style="left:1027px;top:578.40px;width:88px"></div>
<div class="bb" style="left:1117px;top:578.40px;width:108px"></div>
<div class="bb" style="left:1227px;top:578.40px;width:509px"></div>
<div class="bb" style="left:1738px;top:578.40px;width:109px"></div>
<div class="c" style="left:181px;width:65px;text-align:center;top:553.20px">7</div>
<div class="cb" style="left:266px;top:552.20px"></div>
<div class="c" style="left:315px;top:553.20px">8y4358x8st</div>
<div class="c" style="left:424px;top:553.20px">智+...</div>
<div class="c cj" style="left:490px;top:553.20px">启用</div>
<div class="c" style="left:600px;top:553.20px">0003</div>
<div class="c cj" style="left:710px;top:553.20px">团圆路</div>
<div class="c" style="left:820px;top:553.20px">00020001</div>
<div class="c" style="left:930px;top:553.20px">00020001</div>
<div class="c" style="left:1040px;top:553.20px">176195...</div>
<div class="c cj" style="left:1131px;top:553.20px">已使用</div>
<div class="c cj" style="left:1241px;top:553.20px">已加密</div>
<svg class="abs" style="left:1785px;top:556.20px" width="13" height="14" viewBox="0 0 13 14"><path d="M3.35 5.3V3.8A3.15 3.15 0 0 1 9.65 3.8V5.3" fill="none" stroke="#444" stroke-width="1.05"/><rect x="2.2" y="5.35" width="9" height="6.9" rx="1" fill="none" stroke="#666" stroke-width="1"/><path d="M2.3 5.35H10.7M2.6 12.3H10.4" stroke="#333" stroke-width="1.05"/><path d="M5.3 9.1h2.4" stroke="#666" stroke-width="1"/></svg>
<div class="row" style="top:579.40px;height:35.20px;background:#f0f1f6"></div>
<div class="bb" style="left:181px;top:613.60px;width:65px"></div>
<div class="bb" style="left:248px;top:613.60px;width:51px"></div>
<div class="bb" style="left:301px;top:613.60px;width:108px"></div>
<div class="bb" style="left:411px;top:613.60px;width:64px"></div>
<div class="bb" style="left:477px;top:613.60px;width:108px"></div>
<div class="bb" style="left:587px;top:613.60px;width:108px"></div>
<div class="bb" style="left:697px;top:613.60px;width:108px"></div>
<div class="bb" style="left:807px;top:613.60px;width:108px"></div>
<div class="bb" style="left:917px;top:613.60px;width:108px"></div>
<div class="bb" style="left:1027px;top:613.60px;width:88px"></div>
<div class="bb" style="left:1117px;top:613.60px;width:108px"></div>
<div class="bb" style="left:1227px;top:613.60px;width:509px"></div>
<div class="bb" style="left:1738px;top:613.60px;width:109px"></div>
<div class="c" style="left:181px;width:65px;text-align:center;top:588.40px">8</div>
<div class="cb" style="left:266px;top:587.40px"></div>
<div class="c" style="left:315px;top:588.40px">8y4358x8st</div>
<div class="c" style="left:424px;top:588.40px">智+...</div>
<div class="c cj" style="left:490px;top:588.40px">启用</div>
<div class="c" style="left:600px;top:588.40px">0006</div>
<div class="c cj" style="left:710px;top:588.40px">大渡口</div>
<div class="c" style="left:820px;top:588.40px">00040002</div>
<div class="c cj" style="left:930px;top:588.40px">二展厅</div>
<div class="c" style="left:1040px;top:588.40px">176195...</div>
<div class="c cj" style="left:1131px;top:588.40px">已使用</div>
<div class="c cj" style="left:1241px;top:588.40px">已加密</div>
<svg class="abs" style="left:1785px;top:591.40px" width="13" height="14" viewBox="0 0 13 14"><path d="M3.35 5.3V3.8A3.15 3.15 0 0 1 9.65 3.8V5.3" fill="none" stroke="#444" stroke-width="1.05"/><rect x="2.2" y="5.35" width="9" height="6.9" rx="1" fill="none" stroke="#666" stroke-width="1"/><path d="M2.3 5.35H10.7M2.6 12.3H10.4" stroke="#333" stroke-width="1.05"/><path d="M5.3 9.1h2.4" stroke="#666" stroke-width="1"/></svg>
<div class="row" style="top:614.60px;height:35.20px;background:#fff"></div>
<div class="bb" style="left:181px;top:648.80px;width:65px"></div>
<div class="bb" style="left:248px;top:648.80px;width:51px"></div>
<div class="bb" style="left:301px;top:648.80px;width:108px"></div>
<div class="bb" style="left:411px;top:648.80px;width:64px"></div>
<div class="bb" style="left:477px;top:648.80px;width:108px"></div>
<div class="bb" style="left:587px;top:648.80px;width:108px"></div>
<div class="bb" style="left:697px;top:648.80px;width:108px"></div>
<div class="bb" style="left:807px;top:648.80px;width:108px"></div>
<div class="bb" style="left:917px;top:648.80px;width:108px"></div>
<div class="bb" style="left:1027px;top:648.80px;width:88px"></div>
<div class="bb" style="left:1117px;top:648.80px;width:108px"></div>
<div class="bb" style="left:1227px;top:648.80px;width:509px"></div>
<div class="bb" style="left:1738px;top:648.80px;width:109px"></div>
<div class="c" style="left:181px;width:65px;text-align:center;top:623.60px">9</div>
<div class="cb" style="left:266px;top:622.60px"></div>
<div class="c" style="left:315px;top:623.60px">8y4358x8st</div>
<div class="c" style="left:424px;top:623.60px">智+...</div>
<div class="c cj" style="left:490px;top:623.60px">启用</div>
<div class="c" style="left:600px;top:623.60px">0008</div>
<div class="c cj" style="left:710px;top:623.60px">邹邹店</div>
<div class="c" style="left:820px;top:623.60px">00080001</div>
<div class="c" style="left:930px;top:623.60px">00080001</div>
<div class="c" style="left:1040px;top:623.60px">176195...</div>
<div class="c cj" style="left:1131px;top:623.60px">已使用</div>
<div class="c cj" style="left:1241px;top:623.60px">已加密</div>
<svg class="abs" style="left:1785px;top:626.60px" width="13" height="14" viewBox="0 0 13 14"><path d="M3.35 5.3V3.8A3.15 3.15 0 0 1 9.65 3.8V5.3" fill="none" stroke="#444" stroke-width="1.05"/><rect x="2.2" y="5.35" width="9" height="6.9" rx="1" fill="none" stroke="#666" stroke-width="1"/><path d="M2.3 5.35H10.7M2.6 12.3H10.4" stroke="#333" stroke-width="1.05"/><path d="M5.3 9.1h2.4" stroke="#666" stroke-width="1"/></svg>
<div class="row" style="top:649.80px;height:35.20px;background:#f0f1f6"></div>
<div class="bb" style="left:181px;top:684.00px;width:65px"></div>
<div class="bb" style="left:248px;top:684.00px;width:51px"></div>
<div class="bb" style="left:301px;top:684.00px;width:108px"></div>
<div class="bb" style="left:411px;top:684.00px;width:64px"></div>
<div class="bb" style="left:477px;top:684.00px;width:108px"></div>
<div class="bb" style="left:587px;top:684.00px;width:108px"></div>
<div class="bb" style="left:697px;top:684.00px;width:108px"></div>
<div class="bb" style="left:807px;top:684.00px;width:108px"></div>
<div class="bb" style="left:917px;top:684.00px;width:108px"></div>
<div class="bb" style="left:1027px;top:684.00px;width:88px"></div>
<div class="bb" style="left:1117px;top:684.00px;width:108px"></div>
<div class="bb" style="left:1227px;top:684.00px;width:509px"></div>
<div class="bb" style="left:1738px;top:684.00px;width:109px"></div>
<div class="c" style="left:181px;width:65px;text-align:center;top:658.80px">10</div>
<div class="cb" style="left:266px;top:657.80px"></div>
<div class="c" style="left:315px;top:658.80px">8y4358x8st</div>
<div class="c" style="left:424px;top:658.80px">智+...</div>
<div class="c cj" style="left:490px;top:658.80px">启用</div>
<div class="c" style="left:600px;top:658.80px">0008</div>
<div class="c cj" style="left:710px;top:658.80px">邹邹店</div>
<div class="c" style="left:820px;top:658.80px">00080003</div>
<div class="c" style="left:930px;top:658.80px">00080003</div>
<div class="c" style="left:1040px;top:658.80px">176195...</div>
<div class="c cj" style="left:1131px;top:658.80px">已使用</div>
<div class="c cj" style="left:1241px;top:658.80px">已加密</div>
<svg class="abs" style="left:1785px;top:661.80px" width="13" height="14" viewBox="0 0 13 14"><path d="M3.35 5.3V3.8A3.15 3.15 0 0 1 9.65 3.8V5.3" fill="none" stroke="#444" stroke-width="1.05"/><rect x="2.2" y="5.35" width="9" height="6.9" rx="1" fill="none" stroke="#666" stroke-width="1"/><path d="M2.3 5.35H10.7M2.6 12.3H10.4" stroke="#333" stroke-width="1.05"/><path d="M5.3 9.1h2.4" stroke="#666" stroke-width="1"/></svg>
<div class="row" style="top:685.00px;height:35.20px;background:#fff"></div>
<div class="bb" style="left:181px;top:719.20px;width:65px"></div>
<div class="bb" style="left:248px;top:719.20px;width:51px"></div>
<div class="bb" style="left:301px;top:719.20px;width:108px"></div>
<div class="bb" style="left:411px;top:719.20px;width:64px"></div>
<div class="bb" style="left:477px;top:719.20px;width:108px"></div>
<div class="bb" style="left:587px;top:719.20px;width:108px"></div>
<div class="bb" style="left:697px;top:719.20px;width:108px"></div>
<div class="bb" style="left:807px;top:719.20px;width:108px"></div>
<div class="bb" style="left:917px;top:719.20px;width:108px"></div>
<div class="bb" style="left:1027px;top:719.20px;width:88px"></div>
<div class="bb" style="left:1117px;top:719.20px;width:108px"></div>
<div class="bb" style="left:1227px;top:719.20px;width:509px"></div>
<div class="bb" style="left:1738px;top:719.20px;width:109px"></div>
<div class="c" style="left:181px;width:65px;text-align:center;top:694.00px">11</div>
<div class="cb" style="left:266px;top:693.00px"></div>
<div class="c" style="left:315px;top:694.00px">8y4358x8st</div>
<div class="c" style="left:424px;top:694.00px">智+...</div>
<div class="c cj" style="left:490px;top:694.00px">启用</div>
<div class="c" style="left:600px;top:694.00px">0008</div>
<div class="c cj" style="left:710px;top:694.00px">邹邹店</div>
<div class="c" style="left:820px;top:694.00px">00080006</div>
<div class="c" style="left:930px;top:694.00px">00080006</div>
<div class="c" style="left:1040px;top:694.00px">176195...</div>
<div class="c cj" style="left:1131px;top:694.00px">已使用</div>
<div class="c cj" style="left:1241px;top:694.00px">已加密</div>
<svg class="abs" style="left:1785px;top:697.00px" width="13" height="14" viewBox="0 0 13 14"><path d="M3.35 5.3V3.8A3.15 3.15 0 0 1 9.65 3.8V5.3" fill="none" stroke="#444" stroke-width="1.05"/><rect x="2.2" y="5.35" width="9" height="6.9" rx="1" fill="none" stroke="#666" stroke-width="1"/><path d="M2.3 5.35H10.7M2.6 12.3H10.4" stroke="#333" stroke-width="1.05"/><path d="M5.3 9.1h2.4" stroke="#666" stroke-width="1"/></svg>
<div class="row" style="top:720.20px;height:35.20px;background:#f0f1f6"></div>
<div class="bb" style="left:181px;top:754.40px;width:65px"></div>
<div class="bb" style="left:248px;top:754.40px;width:51px"></div>
<div class="bb" style="left:301px;top:754.40px;width:108px"></div>
<div class="bb" style="left:411px;top:754.40px;width:64px"></div>
<div class="bb" style="left:477px;top:754.40px;width:108px"></div>
<div class="bb" style="left:587px;top:754.40px;width:108px"></div>
<div class="bb" style="left:697px;top:754.40px;width:108px"></div>
<div class="bb" style="left:807px;top:754.40px;width:108px"></div>
<div class="bb" style="left:917px;top:754.40px;width:108px"></div>
<div class="bb" style="left:1027px;top:754.40px;width:88px"></div>
<div class="bb" style="left:1117px;top:754.40px;width:108px"></div>
<div class="bb" style="left:1227px;top:754.40px;width:509px"></div>
<div class="bb" style="left:1738px;top:754.40px;width:109px"></div>
<div class="c" style="left:181px;width:65px;text-align:center;top:729.20px">12</div>
<div class="cb" style="left:266px;top:728.20px"></div>
<div class="c" style="left:315px;top:729.20px">8y4358x8st</div>
<div class="c" style="left:424px;top:729.20px">智+...</div>
<div class="c cj" style="left:490px;top:729.20px">启用</div>
<div class="c" style="left:600px;top:729.20px">0008</div>
<div class="c cj" style="left:710px;top:729.20px">邹邹店</div>
<div class="c" style="left:820px;top:729.20px">00080008</div>
<div class="c" style="left:930px;top:729.20px">00080008</div>
<div class="c" style="left:1040px;top:729.20px">212027...</div>
<div class="c cj" style="left:1131px;top:729.20px">已使用</div>
<div class="c cj" style="left:1241px;top:729.20px">已加密</div>
<svg class="abs" style="left:1785px;top:732.20px" width="13" height="14" viewBox="0 0 13 14"><path d="M3.35 5.3V3.8A3.15 3.15 0 0 1 9.65 3.8V5.3" fill="none" stroke="#444" stroke-width="1.05"/><rect x="2.2" y="5.35" width="9" height="6.9" rx="1" fill="none" stroke="#666" stroke-width="1"/><path d="M2.3 5.35H10.7M2.6 12.3H10.4" stroke="#333" stroke-width="1.05"/><path d="M5.3 9.1h2.4" stroke="#666" stroke-width="1"/></svg>
<div class="row" style="top:755.40px;height:35.20px;background:#fff"></div>
<div class="bb" style="left:181px;top:789.60px;width:65px"></div>
<div class="bb" style="left:248px;top:789.60px;width:51px"></div>
<div class="bb" style="left:301px;top:789.60px;width:108px"></div>
<div class="bb" style="left:411px;top:789.60px;width:64px"></div>
<div class="bb" style="left:477px;top:789.60px;width:108px"></div>
<div class="bb" style="left:587px;top:789.60px;width:108px"></div>
<div class="bb" style="left:697px;top:789.60px;width:108px"></div>
<div class="bb" style="left:807px;top:789.60px;width:108px"></div>
<div class="bb" style="left:917px;top:789.60px;width:108px"></div>
<div class="bb" style="left:1027px;top:789.60px;width:88px"></div>
<div class="bb" style="left:1117px;top:789.60px;width:108px"></div>
<div class="bb" style="left:1227px;top:789.60px;width:509px"></div>
<div class="bb" style="left:1738px;top:789.60px;width:109px"></div>
<div class="c" style="left:181px;width:65px;text-align:center;top:764.40px">13</div>
<div class="cb" style="left:266px;top:763.40px"></div>
<div class="c" style="left:315px;top:764.40px">8y4358x8st</div>
<div class="c" style="left:424px;top:764.40px">智+...</div>
<div class="c cj" style="left:490px;top:764.40px">启用</div>
<div class="c" style="left:600px;top:764.40px">0010</div>
<div class="c cj" style="left:710px;top:764.40px">刘影测试门店</div>
<div class="c" style="left:820px;top:764.40px">00100003</div>
<div class="c" style="left:930px;top:764.40px">00100003</div>
<div class="c" style="left:1040px;top:764.40px">180262...</div>
<div class="c cj" style="left:1131px;top:764.40px">已使用</div>
<div class="c cj" style="left:1241px;top:764.40px">已加密</div>
<svg class="abs" style="left:1785px;top:767.40px" width="13" height="14" viewBox="0 0 13 14"><path d="M3.35 5.3V3.8A3.15 3.15 0 0 1 9.65 3.8V5.3" fill="none" stroke="#444" stroke-width="1.05"/><rect x="2.2" y="5.35" width="9" height="6.9" rx="1" fill="none" stroke="#666" stroke-width="1"/><path d="M2.3 5.35H10.7M2.6 12.3H10.4" stroke="#333" stroke-width="1.05"/><path d="M5.3 9.1h2.4" stroke="#666" stroke-width="1"/></svg>
<div class="row" style="top:790.60px;height:35.20px;background:#f0f1f6"></div>
<div class="bb" style="left:181px;top:824.80px;width:65px"></div>
<div class="bb" style="left:248px;top:824.80px;width:51px"></div>
<div class="bb" style="left:301px;top:824.80px;width:108px"></div>
<div class="bb" style="left:411px;top:824.80px;width:64px"></div>
<div class="bb" style="left:477px;top:824.80px;width:108px"></div>
<div class="bb" style="left:587px;top:824.80px;width:108px"></div>
<div class="bb" style="left:697px;top:824.80px;width:108px"></div>
<div class="bb" style="left:807px;top:824.80px;width:108px"></div>
<div class="bb" style="left:917px;top:824.80px;width:108px"></div>
<div class="bb" style="left:1027px;top:824.80px;width:88px"></div>
<div class="bb" style="left:1117px;top:824.80px;width:108px"></div>
<div class="bb" style="left:1227px;top:824.80px;width:509px"></div>
<div class="bb" style="left:1738px;top:824.80px;width:109px"></div>
<div class="c" style="left:181px;width:65px;text-align:center;top:799.60px">14</div>
<div class="cb" style="left:266px;top:798.60px"></div>
<div class="c" style="left:315px;top:799.60px">8y4358x8st</div>
<div class="c" style="left:424px;top:799.60px">智+...</div>
<div class="c cj" style="left:490px;top:799.60px">启用</div>
<div class="c" style="left:600px;top:799.60px">0010</div>
<div class="c cj" style="left:710px;top:799.60px">刘影测试门店</div>
<div class="c" style="left:820px;top:799.60px">00100004</div>
<div class="c" style="left:930px;top:799.60px">00100004</div>
<div class="c" style="left:1040px;top:799.60px">180368...</div>
<div class="c cj" style="left:1131px;top:799.60px">已使用</div>
<div class="c cj" style="left:1241px;top:799.60px">已加密</div>
<svg class="abs" style="left:1785px;top:802.60px" width="13" height="14" viewBox="0 0 13 14"><path d="M3.35 5.3V3.8A3.15 3.15 0 0 1 9.65 3.8V5.3" fill="none" stroke="#444" stroke-width="1.05"/><rect x="2.2" y="5.35" width="9" height="6.9" rx="1" fill="none" stroke="#666" stroke-width="1"/><path d="M2.3 5.35H10.7M2.6 12.3H10.4" stroke="#333" stroke-width="1.05"/><path d="M5.3 9.1h2.4" stroke="#666" stroke-width="1"/></svg>
<div class="row" style="top:825.80px;height:35.20px;background:#fff"></div>
<div class="bb" style="left:181px;top:860.00px;width:65px"></div>
<div class="bb" style="left:248px;top:860.00px;width:51px"></div>
<div class="bb" style="left:301px;top:860.00px;width:108px"></div>
<div class="bb" style="left:411px;top:860.00px;width:64px"></div>
<div class="bb" style="left:477px;top:860.00px;width:108px"></div>
<div class="bb" style="left:587px;top:860.00px;width:108px"></div>
<div class="bb" style="left:697px;top:860.00px;width:108px"></div>
<div class="bb" style="left:807px;top:860.00px;width:108px"></div>
<div class="bb" style="left:917px;top:860.00px;width:108px"></div>
<div class="bb" style="left:1027px;top:860.00px;width:88px"></div>
<div class="bb" style="left:1117px;top:860.00px;width:108px"></div>
<div class="bb" style="left:1227px;top:860.00px;width:509px"></div>
<div class="bb" style="left:1738px;top:860.00px;width:109px"></div>
<div class="c" style="left:181px;width:65px;text-align:center;top:834.80px">15</div>
<div class="cb" style="left:266px;top:833.80px"></div>
<div class="c" style="left:315px;top:834.80px">8y4358x8st</div>
<div class="c" style="left:424px;top:834.80px">智+...</div>
<div class="c cj" style="left:490px;top:834.80px">启用</div>
<div class="c" style="left:600px;top:834.80px">0014</div>
<div class="c cj" style="left:710px;top:834.80px">北京产业园...</div>
<div class="c" style="left:820px;top:834.80px">00130001</div>
<div class="c" style="left:930px;top:834.80px">00130001</div>
<div class="c" style="left:1040px;top:834.80px">176195...</div>
<div class="c cj" style="left:1131px;top:834.80px">已使用</div>
<div class="c cj" style="left:1241px;top:834.80px">已加密</div>
<svg class="abs" style="left:1785px;top:837.80px" width="13" height="14" viewBox="0 0 13 14"><path d="M3.35 5.3V3.8A3.15 3.15 0 0 1 9.65 3.8V5.3" fill="none" stroke="#444" stroke-width="1.05"/><rect x="2.2" y="5.35" width="9" height="6.9" rx="1" fill="none" stroke="#666" stroke-width="1"/><path d="M2.3 5.35H10.7M2.6 12.3H10.4" stroke="#333" stroke-width="1.05"/><path d="M5.3 9.1h2.4" stroke="#666" stroke-width="1"/></svg>
<div class="row" style="top:861.00px;height:35.20px;background:#f0f1f6"></div>
<div class="bb" style="left:181px;top:895.20px;width:65px"></div>
<div class="bb" style="left:248px;top:895.20px;width:51px"></div>
<div class="bb" style="left:301px;top:895.20px;width:108px"></div>
<div class="bb" style="left:411px;top:895.20px;width:64px"></div>
<div class="bb" style="left:477px;top:895.20px;width:108px"></div>
<div class="bb" style="left:587px;top:895.20px;width:108px"></div>
<div class="bb" style="left:697px;top:895.20px;width:108px"></div>
<div class="bb" style="left:807px;top:895.20px;width:108px"></div>
<div class="bb" style="left:917px;top:895.20px;width:108px"></div>
<div class="bb" style="left:1027px;top:895.20px;width:88px"></div>
<div class="bb" style="left:1117px;top:895.20px;width:108px"></div>
<div class="bb" style="left:1227px;top:895.20px;width:509px"></div>
<div class="bb" style="left:1738px;top:895.20px;width:109px"></div>
<div class="c" style="left:181px;width:65px;text-align:center;top:870.00px">16</div>
<div class="cb" style="left:266px;top:869.00px"></div>
<div class="c" style="left:315px;top:870.00px">8y4358x8st</div>
<div class="c" style="left:424px;top:870.00px">智+...</div>
<div class="c cj" style="left:490px;top:870.00px">启用</div>
<div class="c" style="left:600px;top:870.00px">0017</div>
<div class="c cj" style="left:710px;top:870.00px">门店服饰</div>
<div class="c" style="left:820px;top:870.00px">00170001</div>
<div class="c" style="left:930px;top:870.00px">00170001</div>
<div class="c" style="left:1040px;top:870.00px">210416...</div>
<div class="c cj" style="left:1131px;top:870.00px">已使用</div>
<div class="c cj" style="left:1241px;top:870.00px">已加密</div>
<svg class="abs" style="left:1785px;top:873.00px" width="13" height="14" viewBox="0 0 13 14"><path d="M3.35 5.3V3.8A3.15 3.15 0 0 1 9.65 3.8V5.3" fill="none" stroke="#444" stroke-width="1.05"/><rect x="2.2" y="5.35" width="9" height="6.9" rx="1" fill="none" stroke="#666" stroke-width="1"/><path d="M2.3 5.35H10.7M2.6 12.3H10.4" stroke="#333" stroke-width="1.05"/><path d="M5.3 9.1h2.4" stroke="#666" stroke-width="1"/></svg>
<div class="row" style="top:896.20px;height:35.20px;background:#fff"></div>
<div class="c" style="left:181px;width:65px;text-align:center;top:905.20px">17</div>
<div class="cb" style="left:266px;top:904.20px"></div>
<div class="c" style="left:315px;top:905.20px">isdxl3ij59</div>
<div class="c cj" style="left:424px;top:905.20px">交付...</div>
<div class="c cj" style="left:490px;top:905.20px">启用</div>
<div class="c" style="left:600px;top:905.20px">0001</div>
<div class="c cj" style="left:710px;top:905.20px">海淀区店</div>
<div class="c" style="left:820px;top:905.20px">00010001</div>
<div class="c" style="left:930px;top:905.20px">00010001</div>
<div class="c" style="left:1040px;top:905.20px">230026...</div>
<div class="c cj" style="left:1131px;top:905.20px">已使用</div>
<div class="c cj" style="left:1241px;top:905.20px">已加密</div>
<svg class="abs" style="left:1785px;top:908.20px" width="13" height="14" viewBox="0 0 13 14"><path d="M3.35 5.3V3.8A3.15 3.15 0 0 1 9.65 3.8V5.3" fill="none" stroke="#444" stroke-width="1.05"/><rect x="2.2" y="5.35" width="9" height="6.9" rx="1" fill="none" stroke="#666" stroke-width="1"/><path d="M2.3 5.35H10.7M2.6 12.3H10.4" stroke="#333" stroke-width="1.05"/><path d="M5.3 9.1h2.4" stroke="#666" stroke-width="1"/></svg>
<div class="abs" style="left:1837px;top:335px;width:10px;height:366px;border-radius:5px;background:rgba(0,0,0,0.3)"></div>
<div class="abs" style="left:126px;top:925px;width:1788px;height:11px;background:#f2f3f5"></div>
<div class="abs" style="left:1846px;top:897px;width:1px;height:27px;background:#e6e6e6"></div>
<div class="abs" style="left:1830px;top:923px;width:17px;height:1px;background:#e0e0e0"></div>
</body></html>
